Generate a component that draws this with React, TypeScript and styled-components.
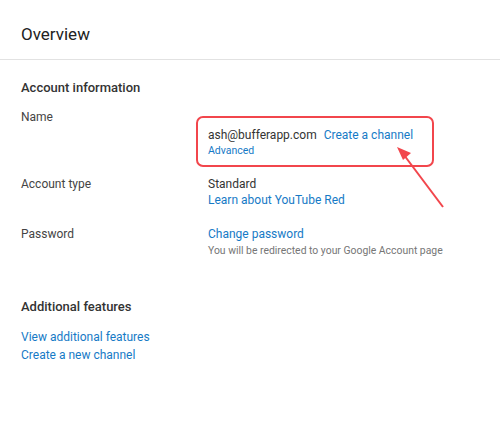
import styled, { createGlobalStyle } from "styled-components";

const GlobalStyle = createGlobalStyle`
  body {
    margin: 0;
    background: #ffffff;
    font-family: Roboto, "Liberation Sans", Arial, sans-serif;
  }
`;

const App = () => {
  return (
    <Page>
      <GlobalStyle />
      <Header>
        <Title>Overview</Title>
      </Header>
      <Section>
        <SectionTitle>Account information</SectionTitle>
        <Row $gap={11}>
          <Label>Name</Label>
          <Value>
            <Highlight>
              <Line>
                <Plain>ash@bufferapp.com</Plain>
                <Link>Create a channel</Link>
              </Line>
              <SmallLink>Advanced</SmallLink>
            </Highlight>
          </Value>
        </Row>
        <Row $gap={9}>
          <Label>Account type</Label>
          <Value>
            <Plain>Standard</Plain>
            <Link>Learn about YouTube Red</Link>
          </Value>
        </Row>
        <Row $gap={18}>
          <Label>Password</Label>
          <Value>
            <Link>Change password</Link>
            <Hint>You will be redirected to your Google Account page</Hint>
          </Value>
        </Row>
      </Section>
      <Features>
        <SectionTitle>Additional features</SectionTitle>
        <LinkList>
          <ListLink>View additional features</ListLink>
          <ListLink>Create a new channel</ListLink>
        </LinkList>
      </Features>
      <Arrow width="500" height="424" viewBox="0 0 500 424">
        <line x1="443" y1="207" x2="404" y2="155" stroke="#f2464c" strokeWidth="2" />
        <polygon points="397,147 411,153 403,160" fill="#f2464c" />
      </Arrow>
    </Page>
  );
};

export default App;

const Page = styled.div`
  position: relative;
  width: 500px;
  height: 424px;
  overflow: hidden;
  background: #fff;
`;

const Header = styled.div`
  height: 60px;
  padding: 22px 0 0 21px;
  box-sizing: border-box;
  border-bottom: 1px solid #e2e2e2;
`;

const Title = styled.h1`
  margin: 0;
  font-size: 17px;
  line-height: 24px;
  font-weight: 400;
  color: #222;
`;

const Section = styled.div`
  padding: 18px 0 0 21px;
`;

const SectionTitle = styled.h2`
  margin: 0;
  font-size: 13px;
  line-height: 20px;
  font-weight: 500;
  color: #333;
`;

const Row = styled.div<{ $gap: number }>`
  display: grid;
  grid-template-columns: 187px 1fr;
  margin-top: ${(p) => p.$gap}px;
`;

const Label = styled.div`
  font-size: 12px;
  line-height: 16px;
  color: #444;
`;

const Value = styled.div`
  display: flex;
  flex-direction: column;
  align-items: flex-start;
`;

const Highlight = styled.div`
  box-sizing: border-box;
  width: 238px;
  margin: 7px 0 0 -12px;
  padding: 9px 10px 6px;
  border: 2px solid #f2464c;
  border-radius: 7px;
`;

const Line = styled.div`
  display: flex;
  gap: 7px;
  white-space: nowrap;
`;

const Plain = styled.span`
  font-size: 12px;
  line-height: 16px;
  color: #333;
`;

const Link = styled.a`
  font-size: 12px;
  line-height: 16px;
  color: #167ac6;
  cursor: pointer;
`;

const SmallLink = styled.a`
  display: block;
  font-size: 10.5px;
  line-height: 16px;
  color: #167ac6;
  cursor: pointer;
`;

const Hint = styled.span`
  font-size: 10.4px;
  line-height: 18px;
  color: #767676;
`;

const Features = styled.div`
  padding: 37px 0 0 21px;
`;

const LinkList = styled.div`
  display: flex;
  flex-direction: column;
  margin-top: 11px;
`;

const ListLink = styled.a`
  font-size: 12px;
  line-height: 18px;
  color: #167ac6;
  cursor: pointer;
`;

const Arrow = styled.svg`
  position: absolute;
  left: 0;
  top: 0;
  pointer-events: none;
`;
